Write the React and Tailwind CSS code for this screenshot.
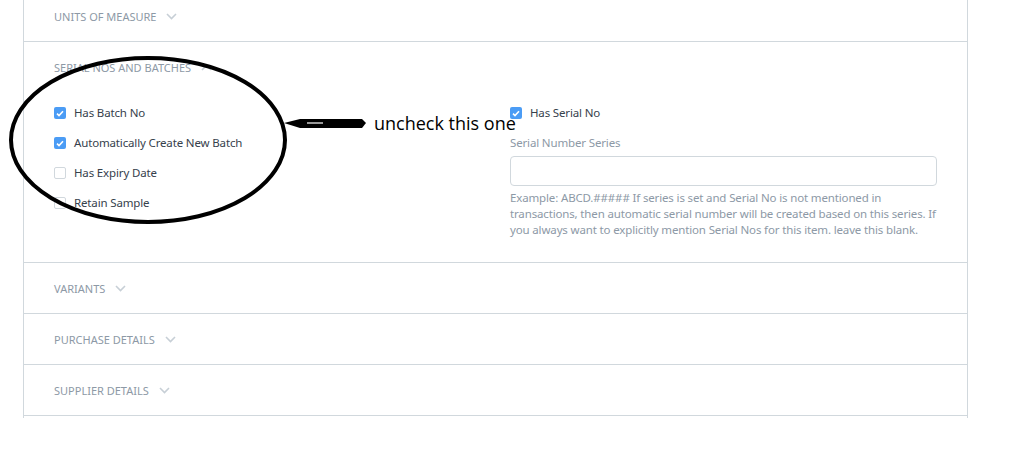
import React from "react";

const font = { fontFamily: '"Noto Sans", "Liberation Sans", sans-serif' };

function Chevron({ up }) {
  return (
    <svg width="11" height="7" viewBox="0 0 11 7" className="ml-[10px]">
      <path
        d={up ? "M1 6 L5.5 1.5 L10 6" : "M1 1 L5.5 5.5 L10 1"}
        fill="none"
        stroke="#c7cfd6"
        strokeWidth="1.6"
      />
    </svg>
  );
}

function SectionHead({ label, up }) {
  return (
    <div className="flex items-center text-[11px] text-[#8d99a6] leading-none">
      <span>{label}</span>
      <Chevron up={up} />
    </div>
  );
}

function Check({ checked, label }) {
  return (
    <div className="flex items-center h-[30px]">
      {checked ? (
        <span className="w-[12px] h-[12px] rounded-[2px] bg-[#4b9cf5] flex items-center justify-center">
          <svg width="8" height="7" viewBox="0 0 8 7">
            <path d="M1 3.6 L3 5.5 L7 1.2" fill="none" stroke="white" strokeWidth="1.6" />
          </svg>
        </span>
      ) : (
        <span className="w-[12px] h-[12px] rounded-[2px] border border-[#d1d8dd] bg-white" />
      )}
      <span className="ml-[8px] text-[11.5px] tracking-[-0.15px] text-[#36414c]">{label}</span>
    </div>
  );
}

function Row({ label }) {
  return (
    <div className="h-[51px] border-b border-[#d1d8dd] pl-[30px] flex items-center">
      <SectionHead label={label} />
    </div>
  );
}

export default function App() {
  return (
    <div className="relative w-[1016px] h-[452px] bg-white overflow-hidden" style={font}>
      <div className="ml-[23px] w-[945px] h-[418px] border-x border-[#d1d8dd]">
        <div className="h-[42px] border-b border-[#d1d8dd] pl-[30px] pt-[11px]">
          <SectionHead label="UNITS OF MEASURE" />
        </div>

        <div className="h-[221px] border-b border-[#d1d8dd] pl-[30px] pt-[20px]">
          <SectionHead label="SERIAL NOS AND BATCHES" up />
          <div className="flex mt-[25px]">
            <div className="w-[456px]">
              <Check checked label="Has Batch No" />
              <Check checked label="Automatically Create New Batch" />
              <Check label="Has Expiry Date" />
              <Check label="Retain Sample" />
            </div>
            <div className="w-[427px]">
              <Check checked label="Has Serial No" />
              <div className="text-[11.5px] tracking-[-0.15px] text-[#8d99a6] leading-none mt-[9px]">Serial Number Series</div>
              <div className="mt-[7px] h-[30px] border border-[#d1d8dd] rounded-[4px]" />
              <p className="mt-[4px] text-[11.5px] tracking-[-0.15px] leading-[16px] text-[#8d99a6]">
                Example: ABCD.##### If series is set and Serial No is not mentioned in transactions, then automatic serial number will be created based on this series. If you always want to explicitly mention Serial Nos for this item. leave this blank.
              </p>
            </div>
          </div>
        </div>

        <Row label="VARIANTS" />
        <Row label="PURCHASE DETAILS" />
        <Row label="SUPPLIER DETAILS" />
      </div>

      {/* annotation drawn on top of the screenshot */}
      <svg className="absolute left-0 top-0" width="1016" height="452">
        <ellipse cx="148" cy="140" rx="137" ry="82" fill="none" stroke="black" strokeWidth="4" />
        <path d="M284 123 L300 119 L362 119 L366 123 L362 128 L300 128 Z" fill="black" />
        <path d="M307 123 L323 123" stroke="white" strokeWidth="1.2" />
      </svg>
      <div
        className="absolute left-[374px] top-[111px] text-[18px] leading-[24px] text-black"
        style={{ fontFamily: '"Open Sans", "Liberation Sans", sans-serif' }}
      >
        uncheck this one
      </div>
    </div>
  );
}
